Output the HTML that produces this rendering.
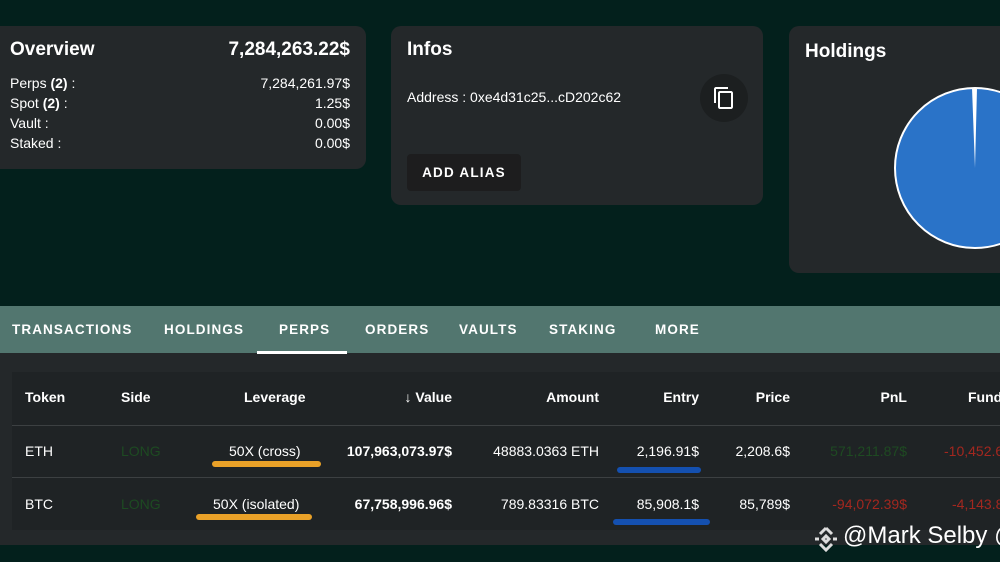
<!DOCTYPE html>
<html><head><style>
html,body{margin:0;width:1000px;height:562px;overflow:hidden}
body{background:#03201c;font-family:"Liberation Sans",sans-serif;color:#fff}
#w{position:relative;width:1000px;height:562px;overflow:hidden}
.card{position:absolute;background:#24282a;border-radius:10px}
.a{position:absolute;white-space:nowrap}
.r{text-align:right}
.h{font-weight:bold;font-size:14px}
.c{font-size:14px}
</style></head><body><div id="w">
<div class="card" style="left:-10px;top:26px;width:376px;height:143px"></div>
<div class="a" style="left:10px;top:39px;font-size:19px;font-weight:bold">Overview</div>
<div class="a r" style="right:650px;top:39px;font-size:19px;font-weight:bold">7,284,263.22$</div>
<div class="a" style="left:10px;top:73px;font-size:14px;line-height:20px">Perps <b>(2)</b> :<br>Spot <b>(2)</b> :<br>Vault :<br>Staked :</div>
<div class="a r" style="right:650px;top:73px;font-size:14px;line-height:20px">7,284,261.97$<br>1.25$<br>0.00$<br>0.00$</div>

<div class="card" style="left:391px;top:26px;width:372px;height:179px"></div>
<div class="a" style="left:407px;top:39px;font-size:19px;font-weight:bold">Infos</div>
<div class="a" style="left:407px;top:89px;font-size:14px">Address : 0xe4d31c25...cD202c62</div>
<div class="a" style="left:700px;top:74px;width:48px;height:48px;border-radius:50%;background:#1c1f20"></div>
<svg class="a" style="left:712px;top:86px" width="24" height="24" viewBox="0 0 24 24"><path d="M16 1H4c-1.1 0-2 .9-2 2v14h2V3h12V1zm3 4H8c-1.1 0-2 .9-2 2v14c0 1.1.9 2 2 2h11c1.1 0 2-.9 2-2V7c0-1.1-.9-2-2-2zm0 16H8V7h11v14z" fill="#fff"/></svg>
<div class="a" style="left:407px;top:154px;width:114px;height:37px;background:#1d1d1e;border-radius:4px;font-weight:bold;font-size:13.5px;letter-spacing:1.2px;line-height:37px;text-align:center">ADD ALIAS</div>

<div class="card" style="left:789px;top:26px;width:230px;height:247px"></div>
<div class="a" style="left:805px;top:41px;font-size:19px;font-weight:bold">Holdings</div>
<svg class="a" style="left:893px;top:86px" width="107" height="164"><circle cx="82" cy="82" r="80" fill="#2a73c8" stroke="#fff" stroke-width="2"/><path d="M79 2 L82 82 L84 2Z" fill="#fff"/></svg>

<div class="a" style="left:0;top:306px;width:1000px;height:47px;background:#52766f"></div>
<div class="a" style="left:0;top:353px;width:1000px;height:192px;background:#24282a"></div>
<div class="a" style="left:12px;top:372px;width:988px;height:158px;background:#1f2325"></div>
<div class="a" style="left:12px;top:425px;width:988px;height:1px;background:#3c4042"></div>
<div class="a" style="left:12px;top:477px;width:988px;height:1px;background:#3c4042"></div>
<div style="font-weight:bold;font-size:13.5px;letter-spacing:1.1px">
<div class="a" style="left:12px;top:322px">TRANSACTIONS</div>
<div class="a" style="left:164px;top:322px">HOLDINGS</div>
<div class="a" style="left:279px;top:322px">PERPS</div>
<div class="a" style="left:365px;top:322px">ORDERS</div>
<div class="a" style="left:459px;top:322px">VAULTS</div>
<div class="a" style="left:549px;top:322px">STAKING</div>
<div class="a" style="left:655px;top:322px">MORE</div>
</div>
<div class="a" style="left:257px;top:351px;width:90px;height:3px;background:#fff"></div>

<div class="a h" style="left:25px;top:389px">Token</div>
<div class="a h" style="left:121px;top:389px">Side</div>
<div class="a h" style="left:244px;top:389px">Leverage</div>
<div class="a h r" style="right:548px;top:389px">↓ Value</div>
<div class="a h r" style="right:401px;top:389px">Amount</div>
<div class="a h r" style="right:301px;top:389px">Entry</div>
<div class="a h r" style="right:210px;top:389px">Price</div>
<div class="a h r" style="right:93px;top:389px">PnL</div>
<div class="a h" style="left:968px;top:389px;width:32px;overflow:hidden">Funding</div>

<div class="a c" style="left:25px;top:443px">ETH</div>
<div class="a c" style="left:121px;top:443px;color:#1d4a22">LONG</div>
<div class="a c" style="left:229px;top:443px">50X (cross)</div>
<div class="a c r" style="right:548px;top:443px;font-weight:bold">107,963,073.97$</div>
<div class="a c r" style="right:401px;top:443px">48883.0363 ETH</div>
<div class="a c r" style="right:301px;top:443px">2,196.91$</div>
<div class="a c r" style="right:210px;top:443px">2,208.6$</div>
<div class="a c r" style="right:93px;top:443px;color:#1e4a22">571,211.87$</div>
<div class="a c" style="left:944px;top:443px;width:56px;overflow:hidden;color:#a3271f">-10,452.6</div>
<div class="a" style="left:212px;top:461px;width:109px;height:6px;border-radius:3px;background:#e9a128"></div>
<div class="a" style="left:617px;top:467px;width:84px;height:6px;border-radius:3px;background:#1450b0"></div>

<div class="a c" style="left:25px;top:496px">BTC</div>
<div class="a c" style="left:121px;top:496px;color:#1d4a22">LONG</div>
<div class="a c" style="left:213px;top:496px">50X (isolated)</div>
<div class="a c r" style="right:548px;top:496px;font-weight:bold">67,758,996.96$</div>
<div class="a c r" style="right:401px;top:496px">789.83316 BTC</div>
<div class="a c r" style="right:301px;top:496px">85,908.1$</div>
<div class="a c r" style="right:210px;top:496px">85,789$</div>
<div class="a c r" style="right:93px;top:496px;color:#a3271f">-94,072.39$</div>
<div class="a c" style="left:952px;top:496px;width:48px;overflow:hidden;color:#a3271f">-4,143.8</div>
<div class="a" style="left:196px;top:514px;width:116px;height:6px;border-radius:3px;background:#e9a128"></div>
<div class="a" style="left:613px;top:519px;width:97px;height:6px;border-radius:3px;background:#1450b0"></div>

<svg class="a" style="left:812px;top:525px" width="28" height="28" viewBox="0 0 28 28"><g fill="none" stroke="#ddd" stroke-width="3"><path d="M14 3 L20 9 M14 3 L8 9 M3 14 L7 14 M21 14 L25 14 M8 19 L14 25 L20 19 M11 14 L14 11 L17 14 L14 17Z"/></g></svg>
<div class="a" style="left:843px;top:522px;width:157px;overflow:hidden;font-size:24px;color:#fff">@Mark Selby @</div>
</div></body></html>
